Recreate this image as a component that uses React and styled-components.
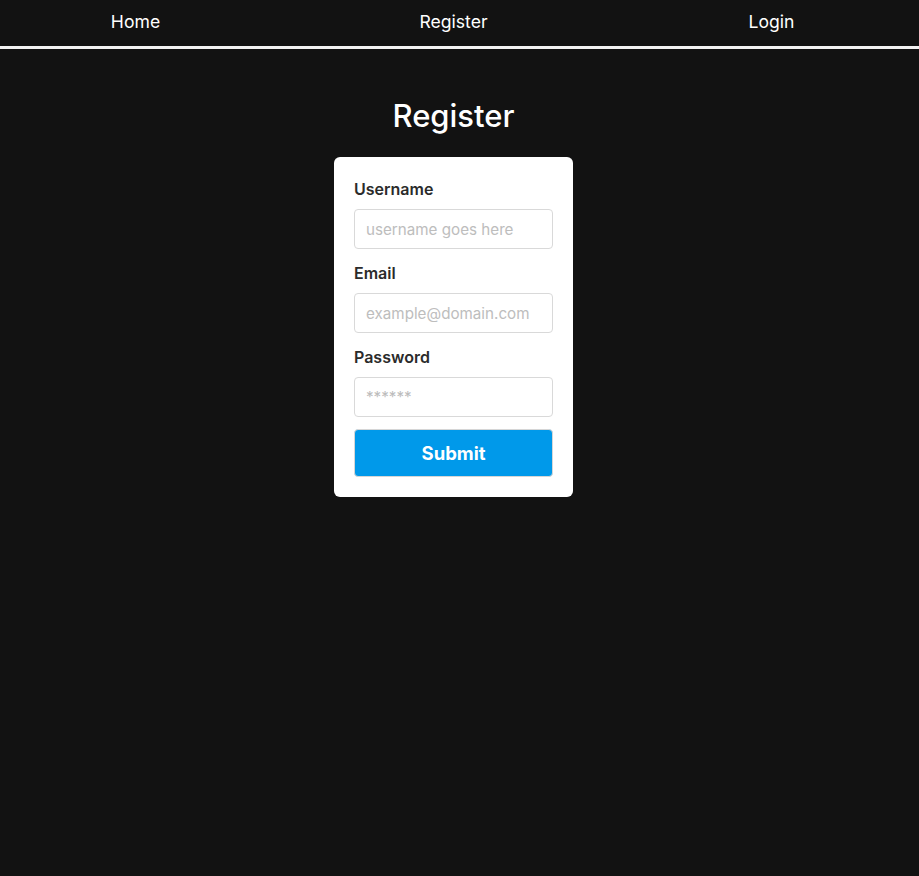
import React from 'react';
import styled, { createGlobalStyle } from 'styled-components';

const GlobalStyle = createGlobalStyle`
  html, body {
    margin: 0;
    padding: 0;
    background: #121212;
  }
  body {
    font-family: Inter, "Noto Sans", "Liberation Sans", sans-serif;
  }
  * {
    box-sizing: border-box;
  }
`;

const Page = styled.div`
  min-height: 100vh;
  background: #121212;
  display: flex;
  flex-direction: column;
`;

const NavBar = styled.nav`
  height: 49px;
  border-bottom: 3px solid #f2f2f2;
  display: flex;
  justify-content: center;
  align-items: center;
  gap: 198px;
  padding: 0 12px 3px 0;
`;

const NavLink = styled.a`
  width: 120px;
  text-align: center;
  color: #ffffff;
  font-size: 17.6px;
  text-decoration: none;
  cursor: pointer;
`;

const Main = styled.main`
  display: flex;
  flex-direction: column;
  align-items: center;
  padding-right: 12px;
`;

const Title = styled.h1`
  margin: 49px 0 23px;
  color: #ffffff;
  font-size: 31px;
  line-height: 36px;
  font-weight: 500;
`;

const Card = styled.form`
  width: 239px;
  padding: 20px;
  background: #ffffff;
  border-radius: 6px;
  display: flex;
  flex-direction: column;
`;

const Label = styled.label`
  color: #2b2b2b;
  font-size: 16px;
  line-height: 24px;
  font-weight: 600;
  margin-bottom: 8px;
`;

const Input = styled.input`
  height: 40px;
  width: 100%;
  margin: 0 0 12px;
  padding: 0 11px;
  border: 1px solid #d9d9d9;
  border-radius: 4px;
  font-family: inherit;
  font-size: 15.2px;
  color: #333;
  outline: none;

  &::placeholder {
    color: #bdbdbd;
  }
`;

const SubmitButton = styled.button`
  height: 48px;
  width: 100%;
  border: 1px solid #d6d6d6;
  border-radius: 4px;
  background: #0099ea;
  color: #ffffff;
  font-family: inherit;
  font-size: 18.5px;
  font-weight: 700;
  cursor: pointer;

  &:hover {
    background: #0a8fd8;
  }
`;

const fields = [
  { id: 'username', label: 'Username', placeholder: 'username goes here' },
  { id: 'email', label: 'Email', placeholder: 'example@domain.com' },
  { id: 'password', label: 'Password', placeholder: '******' },
];

const App = () => {
  return (
    <Page>
      <GlobalStyle />
      <NavBar>
        <NavLink>Home</NavLink>
        <NavLink>Register</NavLink>
        <NavLink>Login</NavLink>
      </NavBar>
      <Main>
        <Title>Register</Title>
        <Card onSubmit={(e) => e.preventDefault()}>
          {fields.map((f) => (
            <React.Fragment key={f.id}>
              <Label htmlFor={f.id}>{f.label}</Label>
              <Input id={f.id} type="text" placeholder={f.placeholder} />
            </React.Fragment>
          ))}
          <SubmitButton type="submit">Submit</SubmitButton>
        </Card>
      </Main>
    </Page>
  );
};

export default App;
